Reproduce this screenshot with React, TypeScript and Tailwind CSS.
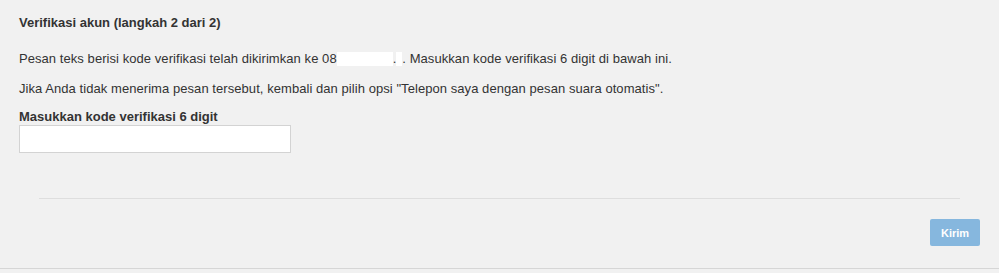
export default function App() {
  return (
    <div className="w-[999px] h-[273px] bg-[#f1f1f1] text-[#333333] font-['Liberation_Sans',Arial,sans-serif] text-[13px] leading-4 tracking-[0.06px]">
      <div className="h-[269px] flex flex-col border-b border-[#d6d6d6]">
        <div className="pl-[19px] pt-[15px]">
          <h2 className="font-bold text-[13px] leading-4 tracking-normal">Verifikasi akun (langkah 2 dari 2)</h2>
          <p className="mt-5">
            Pesan teks berisi kode verifikasi telah dikirimkan ke 08
            <span className="inline-block w-[56px] h-[14px] bg-white align-[-3px]"></span>
            .<span className="inline-block w-[6px] h-[14px] bg-white align-[-3px]"></span>. Masukkan kode verifikasi 6 digit di bawah ini.
          </p>
          <p className="mt-[14px]">
            Jika Anda tidak menerima pesan tersebut, kembali dan pilih opsi "Telepon saya dengan pesan suara otomatis".
          </p>
          <label className="block mt-3 font-bold tracking-normal">Masukkan kode verifikasi 6 digit</label>
          <input
            type="text"
            className="block w-[272px] h-[28px] bg-white border border-[#d3d3d3] outline-none px-2"
          />
        </div>
        <div className="mt-[45px] mx-[39px] h-px bg-[#dedede]"></div>
        <div className="flex justify-end pr-[19px] mt-5">
          <button className="w-[50px] h-[27px] rounded-[2px] bg-[#86b7de] text-white font-bold text-[11px] tracking-normal">
            Kirim
          </button>
        </div>
      </div>
    </div>
  );
}
